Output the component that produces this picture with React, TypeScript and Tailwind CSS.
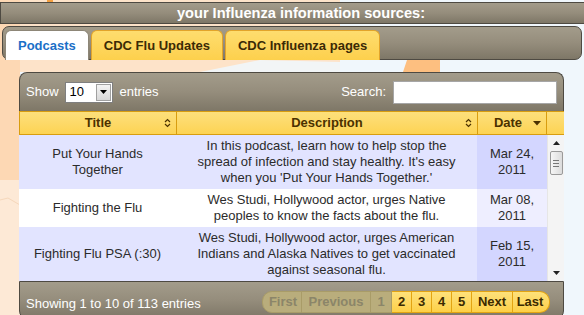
import React from 'react';

const rows = [
  {
    title: 'Put Your Hands Together',
    desc: "In this podcast, learn how to help stop the spread of infection and stay healthy. It's easy when you 'Put Your Hands Together.'",
    date: 'Mar 24, 2011',
  },
  {
    title: 'Fighting the Flu',
    desc: 'Wes Studi, Hollywood actor, urges Native peoples to know the facts about the flu.',
    date: 'Mar 08, 2011',
  },
  {
    title: 'Fighting Flu PSA (:30)',
    desc: 'Wes Studi, Hollywood actor, urges American Indians and Alaska Natives to get vaccinated against seasonal flu.',
    date: 'Feb 15, 2011',
  },
];

function SortBoth() {
  return (
    <svg width="7" height="10" viewBox="0 0 7 10" className="shrink-0">
      <path d="M1 4 L3.5 1.5 L6 4 M1 6 L3.5 8.5 L6 6" fill="none" stroke="#4b3100" strokeWidth="1.2" />
    </svg>
  );
}

function SortDesc() {
  return (
    <svg width="8" height="5" viewBox="0 0 8 5" className="shrink-0">
      <path d="M0 0 H8 L4 4.5 Z" fill="#4b3100" />
    </svg>
  );
}

const taupe = 'bg-linear-to-b from-[#a39c8b] via-[#958d7c] to-[#7e7767]';
const pageOff = 'flex items-center justify-center border border-[#a99c68] bg-[#b9ad7c] text-[#8b8569]';
const pageOn =
  'flex items-center justify-center border border-l-0 border-[#e3a412] bg-linear-to-b from-[#fee17a] to-[#fdd046] text-[#3b2a00]';

export default function App() {
  return (
    <div className="relative w-[584px] h-[315px] overflow-hidden bg-[#f0f7fc] pt-[2px] font-['Liberation_Sans',Arial,sans-serif]">
      {/* map backdrop */}
      <svg className="absolute inset-0 pointer-events-none" width="584" height="315">
        <rect x="0" y="0" width="340" height="72" fill="#fde3c9" />
        <path d="M200 72 L260 60 L340 62 L340 72 Z" fill="#f2f5f6" />
        <path d="M0 0 H20 V180 H0 Z" fill="#fdd8b4" />
        <path d="M0 180 H20 V315 H0 Z" fill="#fde9d6" />
        <path d="M0 200 L8 198 L20 205" fill="none" stroke="#f5d7bb" strokeWidth="1" />
        <rect x="47" y="0" width="6" height="3" fill="#f5a040" />
        <path d="M407 60 L440 60 L440 72 L403 72 Z" fill="#fdbf80" />
      </svg>

      <div className="relative">
        {/* title bar */}
        <div className={`h-[22px] border-y border-l border-[#4e4a42] ${taupe} flex items-center justify-center pl-[17px]`}>
          <span className="text-[14.6px] font-bold text-white leading-none">your Influenza information sources:</span>
        </div>

        {/* tabs */}
        <div className={`mt-[2px] ml-[2px] w-[580px] h-[34px] rounded-[7px] border border-[#4e4a42] ${taupe} flex items-end gap-[2px] pl-[2px]`}>
          <div className="-mb-px h-[30px] px-[12px] flex items-center rounded-t-[6px] border border-b-0 border-[#8d8677] bg-white text-[13px] font-bold text-[#1a6fc7]">
            Podcasts
          </div>
          <div className="-mb-px h-[30px] px-[12px] flex items-center rounded-t-[6px] border border-b-0 border-[#e2a42a] bg-linear-to-b from-[#fedd6e] to-[#fdd04c] text-[13px] font-bold text-[#3b2a06]">
            CDC Flu Updates
          </div>
          <div className="-mb-px h-[30px] px-[12px] flex items-center rounded-t-[6px] border border-b-0 border-[#e2a42a] bg-linear-to-b from-[#fedd6e] to-[#fdd04c] text-[13px] font-bold text-[#3b2a06]">
            CDC Influenza pages
          </div>
        </div>

        {/* data table panel */}
        <div className="mt-[12px] ml-[19px] w-[545px]">
          <div className={`h-[39px] rounded-t-[8px] border border-b-0 border-[#4e4a42] ${taupe} flex items-center justify-between pl-[6px] pr-[6px]`}>
            <div className="flex items-center text-[13px] text-white">
              <span>Show</span>
              <div className="ml-[6px] mr-[7px] w-[48px] h-[21px] bg-white border border-[#7f7f7f] flex items-center">
                <span className="flex-1 pl-[4px] text-[13px] text-black">10</span>
                <div className="w-[15px] h-[17px] mr-px bg-linear-to-b from-[#f4f4f4] to-[#d8d8d8] border border-[#a0a0a0] flex items-center justify-center">
                  <svg width="7" height="4" viewBox="0 0 7 4">
                    <path d="M0 0 H7 L3.5 4 Z" fill="#000" />
                  </svg>
                </div>
              </div>
              <span>entries</span>
            </div>
            <div className="flex items-center text-[13px] text-white">
              <span className="mr-[7px]">Search:</span>
              <div className="w-[164px] h-[23px] bg-white border border-[#a6a6a6]" />
            </div>
          </div>

          {/* header row */}
          <div className="grid grid-cols-[157px_301px_70px_17px] h-[24px] border-y border-[#d89d10] bg-linear-to-b from-[#fde07c] to-[#fdd352] text-[13px] font-bold text-[#4b3100]">
            <div className="relative flex items-center justify-center border-l border-[#d89d10]">
              <span>Title</span>
              <span className="absolute right-[5px] top-[6px]"><SortBoth /></span>
            </div>
            <div className="relative flex items-center justify-center border-l border-[#d89d10]">
              <span>Description</span>
              <span className="absolute right-[5px] top-[6px]"><SortBoth /></span>
            </div>
            <div className="relative flex items-center justify-center border-x border-[#d89d10]">
              <span className="-ml-[8px]">Date</span>
              <span className="absolute right-[5px] top-[9px]"><SortDesc /></span>
            </div>
            <div />
          </div>

          {/* body */}
          <div className="flex h-[146px] overflow-hidden bg-white">
            <div className="w-[528px] text-[13px] leading-4 text-[#2b2b2b]">
              {rows.map((r, i) => (
                <div
                  key={r.title}
                  className={`grid grid-cols-[157px_301px_70px] ${i % 2 === 0 ? 'bg-[#e2e4ff]' : 'bg-white'}`}
                >
                  <div className="flex items-center justify-center text-center px-[10px] py-[3px]">{r.title}</div>
                  <div className="flex items-center justify-center text-center px-[10px] py-[3px]">{r.desc}</div>
                  <div
                    className={`flex items-center justify-center text-center px-[10px] py-[3px] ${
                      i % 2 === 0 ? 'bg-[#d3d6ff]' : 'bg-[#eeeeff]'
                    }`}
                  >
                    {r.date}
                  </div>
                </div>
              ))}
            </div>
            {/* scrollbar */}
            <div className="w-[17px] bg-[#f4f4f4] border-l border-[#e6e6e6] flex flex-col items-center">
              <div className="h-[16px] flex items-center justify-center">
                <svg width="7" height="4" viewBox="0 0 7 4"><path d="M0 4 H7 L3.5 0 Z" fill="#222" /></svg>
              </div>
              <div className="w-[13px] h-[24px] rounded-[2px] border border-[#9a9a9a] bg-linear-to-r from-[#f6f6f6] to-[#dcdcdc] flex flex-col items-center justify-center gap-[2px]">
                <div className="w-[6px] h-px bg-[#777]" />
                <div className="w-[6px] h-px bg-[#777]" />
                <div className="w-[6px] h-px bg-[#777]" />
              </div>
              <div className="flex-1" />
              <div className="h-[16px] flex items-center justify-center">
                <svg width="7" height="4" viewBox="0 0 7 4"><path d="M0 0 H7 L3.5 4 Z" fill="#222" /></svg>
              </div>
            </div>
          </div>

          {/* footer */}
          <div className={`h-[38px] rounded-b-[8px] border border-[#4e4a42] ${taupe} flex items-start justify-between pt-[9px] pl-[6px] pr-[13px]`}>
            <span className="mt-[3px] text-[13px] text-white">Showing 1 to 10 of 113 entries</span>
            <div className="flex h-[22px] text-[13px] font-bold">
              <span className={`w-[40px] pl-[2px] rounded-l-[10px] ${pageOff}`}>First</span>
              <span className={`w-[69px] border-l-0 ${pageOff}`}>Previous</span>
              <span className={`w-[21px] border-l-0 ${pageOff}`}>1</span>
              {['2', '3', '4', '5'].map((p) => (
                <span key={p} className={`w-[20px] ${pageOn}`}>
                  {p}
                </span>
              ))}
              <span className={`w-[41px] ${pageOn}`}>Next</span>
              <span className={`w-[37px] pr-[2px] rounded-r-[10px] ${pageOn}`}>Last</span>
            </div>
          </div>
        </div>
      </div>
    </div>
  );
}
